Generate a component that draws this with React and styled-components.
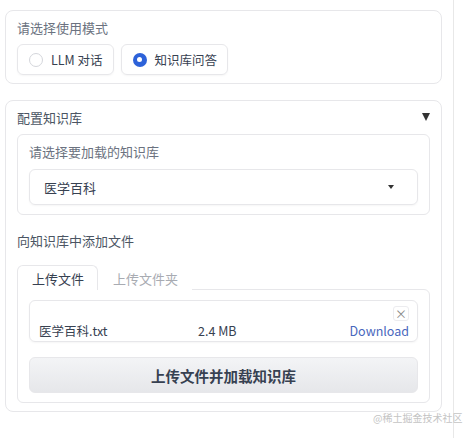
import React from 'react';
import styled, { createGlobalStyle } from 'styled-components';

const GlobalStyle = createGlobalStyle`
  body {
    margin: 0;
    background: #fff;
    font-family: "Noto Sans CJK SC", "Noto Sans", sans-serif;
    color: #374151;
  }
  * { box-sizing: border-box; }
`;

function App() {
  return (
    <>
      <GlobalStyle />
      <Page>
        <Column>
          <Panel>
            <Label>请选择使用模式</Label>
            <RadioRow>
              <RadioOption>
                <RadioDot />
                <span>LLM 对话</span>
              </RadioOption>
              <RadioOption>
                <RadioDot checked />
                <span>知识库问答</span>
              </RadioOption>
            </RadioRow>
          </Panel>

          <Panel accordion>
            <AccordionHead>
              <span>配置知识库</span>
              <Arrow />
            </AccordionHead>

            <Block>
              <Label>请选择要加载的知识库</Label>
              <Dropdown>
                <span>医学百科</span>
                <Caret />
              </Dropdown>
            </Block>

            <SectionTitle>向知识库中添加文件</SectionTitle>

            <Tabs>
              <TabStrip>
                <Tab active>上传文件</Tab>
                <Tab>上传文件夹</Tab>
              </TabStrip>
              <TabPanel>
                <FileBox>
                  <CloseButton>×</CloseButton>
                  <FileRow>
                    <span>医学百科.txt</span>
                    <span>2.4 MB</span>
                    <DownloadLink>Download</DownloadLink>
                  </FileRow>
                </FileBox>
                <BigButton>上传文件并加载知识库</BigButton>
              </TabPanel>
            </Tabs>
          </Panel>
        </Column>
        <Watermark>@稀土掘金技术社区</Watermark>
      </Page>
    </>
  );
}

export default App;

const Page = styled.div`
  position: relative;
  width: 454px;
  height: 438px;
  border-right: 1px solid #e8e8e8;
  padding: 10px 0 0 5px;
`;

const Column = styled.div`
  width: 437px;
  display: flex;
  flex-direction: column;
  gap: 16px;
`;

const Panel = styled.div`
  border: 1px solid #e7e7ea;
  border-radius: 8px;
  padding: ${p => (p.accordion ? '6px 11px 8px' : '8px 11px')};
  background: #fff;
`;

const Label = styled.div`
  font-size: 13px;
  line-height: 18px;
  color: #6b7280;
  margin-bottom: 7px;
`;

const RadioRow = styled.div`
  display: flex;
  gap: 7px;
`;

const RadioOption = styled.label`
  display: flex;
  align-items: center;
  gap: 8px;
  height: 31px;
  padding: 0 10px 0 11px;
  border: 1px solid #e7e7ea;
  border-radius: 6px;
  font-size: 12.5px;
  color: #374151;
  box-shadow: 0 1px 2px rgba(0, 0, 0, 0.04);
`;

const RadioDot = styled.span`
  width: 14px;
  height: 14px;
  border-radius: 50%;
  flex-shrink: 0;
  background: ${p => (p.checked ? '#2d62d9' : '#fff')};
  border: ${p => (p.checked ? 'none' : '1px solid #d4d6db')};
  display: flex;
  align-items: center;
  justify-content: center;
  &::after {
    content: '';
    display: ${p => (p.checked ? 'block' : 'none')};
    width: 5px;
    height: 5px;
    border-radius: 50%;
    background: #fff;
  }
`;

const AccordionHead = styled.div`
  display: flex;
  justify-content: space-between;
  align-items: center;
  height: 20px;
  font-size: 13px;
  color: #4b5563;
  margin-bottom: 7px;
`;

const Arrow = styled.span`
  width: 0;
  height: 0;
  border-left: 4.5px solid transparent;
  border-right: 4.5px solid transparent;
  border-top: 8px solid #333;
`;

const Block = styled.div`
  border: 1px solid #e7e7ea;
  border-radius: 6px;
  padding: 8px 11px 9px;
  & > ${Label} {
    margin-bottom: 8px;
  }
`;

const Dropdown = styled.div`
  height: 36px;
  border: 1px solid #e7e7ea;
  border-radius: 6px;
  display: flex;
  align-items: center;
  justify-content: space-between;
  padding: 0 23px 0 14px;
  font-size: 13px;
  color: #374151;
  box-shadow: 0 1px 2px rgba(0, 0, 0, 0.04);
`;

const Caret = styled.span`
  width: 0;
  height: 0;
  border-left: 3.5px solid transparent;
  border-right: 3.5px solid transparent;
  border-top: 4px solid #333;
`;

const SectionTitle = styled.div`
  margin-top: 16px;
  font-size: 13px;
  line-height: 20px;
  color: #4b5563;
`;

const Tabs = styled.div`
  margin-top: 14px;
`;

const TabStrip = styled.div`
  display: flex;
  height: 24px;
`;

const Tab = styled.div`
  position: relative;
  z-index: 1;
  height: 25px;
  padding: 0 13px 0 14px;
  display: flex;
  align-items: center;
  font-size: 13px;
  color: ${p => (p.active ? '#374151' : '#a8abb2')};
  background: #fff;
  border: 1px solid ${p => (p.active ? '#e7e7ea' : 'transparent')};
  border-bottom: none;
  border-radius: 6px 6px 0 0;
`;

const TabPanel = styled.div`
  border: 1px solid #e7e7ea;
  border-radius: 0 6px 6px 6px;
  padding: 10px 11px 9px;
  display: flex;
  flex-direction: column;
  gap: 15px;
`;

const FileBox = styled.div`
  position: relative;
  height: 42px;
  border: 1px solid #e7e7ea;
  border-radius: 6px;
  display: flex;
  flex-direction: column;
  justify-content: flex-end;
  padding: 0 8px 1px 9px;
  box-shadow: 0 1px 2px rgba(0, 0, 0, 0.04);
`;

const CloseButton = styled.span`
  position: absolute;
  top: 5px;
  right: 8px;
  width: 16px;
  height: 15px;
  border: 1px solid #ececef;
  border-radius: 3px;
  display: flex;
  align-items: center;
  justify-content: center;
  font-size: 12px;
  line-height: 1;
  color: #888;
`;

const FileRow = styled.div`
  display: grid;
  grid-template-columns: 159px auto 1fr;
  align-items: center;
  height: 19px;
  font-size: 12.5px;
  color: #374151;
`;

const DownloadLink = styled.span`
  justify-self: end;
  color: #4a67bd;
`;

const BigButton = styled.button`
  height: 36px;
  border: 1px solid #e7e7ea;
  border-radius: 6px;
  background: linear-gradient(to bottom, #f3f4f6, #e6e7ea);
  font-family: inherit;
  font-size: 14.5px;
  font-weight: 700;
  color: #374151;
  cursor: pointer;
`;

const Watermark = styled.div`
  position: absolute;
  left: 373px;
  top: 410px;
  font-size: 10px;
  color: #c4c4c4;
  white-space: nowrap;
`;
